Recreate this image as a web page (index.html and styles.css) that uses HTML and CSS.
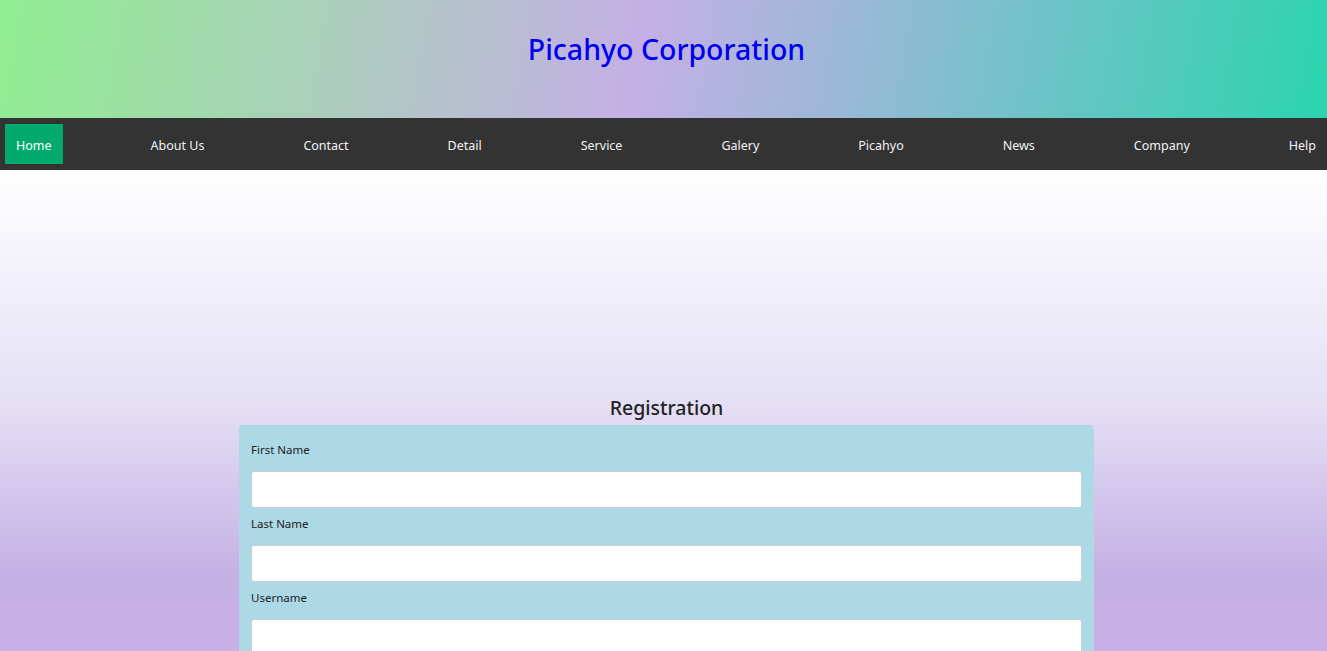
FILE: index.html
```html
<!DOCTYPE html>
<html>
<head>
<meta charset="utf-8">
<link rel="stylesheet" href="styles.css">
</head>
<body>
<header class="header"><h1 class="title">Picahyo Corporation</h1></header>
<nav class="nav">
  <a class="nav-item active">Home</a>
  <a class="nav-item">About Us</a>
  <a class="nav-item">Contact</a>
  <a class="nav-item">Detail</a>
  <a class="nav-item">Service</a>
  <a class="nav-item">Galery</a>
  <a class="nav-item">Picahyo</a>
  <a class="nav-item">News</a>
  <a class="nav-item">Company</a>
  <a class="nav-item">Help</a>
</nav>
<main class="main">
  <h2 class="reg-title">Registration</h2>
  <form class="form">
    <label class="label">First Name</label>
    <input class="input" type="text">
    <label class="label">Last Name</label>
    <input class="input" type="text">
    <label class="label">Username</label>
    <input class="input" type="text">
  </form>
</main>
</body>
</html>
```
FILE: styles.css
```css
html, body { margin: 0; padding: 0; }
body {
  font-family: "Noto Sans", "Open Sans", sans-serif;
  background: #c9b0e8;
  overflow: hidden;
}
.header {
  height: 118px;
  display: flex;
  align-items: center;
  justify-content: center;
  padding-left: 6px;
  box-sizing: border-box;
  background: linear-gradient(100deg, #90ee90 0%, #c4b0e4 48%, #9fb7d8 62%, #2bd4af 100%);
}
.title {
  margin: 0 0 20px 0;
  font-size: 28.5px;
  font-weight: 500;
  color: #0000ee;
}
.nav {
  height: 52px;
  background: #333333;
  display: flex;
  align-items: center;
  justify-content: space-between;
  padding: 0 0 0 5px;
  box-sizing: border-box;
}
.nav-item {
  color: #f2f2f2;
  font-size: 12.5px;
  padding: 13px 11px 9px;
  line-height: 18px;
}
.nav-item.active { background: #04aa6d; color: #fff; }
.main {
  background: linear-gradient(#ffffff 0px, #efedf9 130px, #e5e0f5 230px, #d8cdef 300px, #c4b0e3 410px, #c9b0e8 481px);
  min-height: 481px;
  padding-top: 222px;
  padding-left: 6px;
  box-sizing: border-box;
}
.reg-title {
  margin: 0;
  text-align: center;
  font-size: 19.5px;
  font-weight: 500;
  color: #222;
  line-height: 31px;
}
.form {
  width: 855px;
  margin: 2px auto 0;
  background: #add8e6;
  border-radius: 4px;
  padding: 16px 12px 12px;
  box-sizing: border-box;
  display: flex;
  flex-direction: column;
}
.label {
  font-size: 11.5px;
  color: #222;
  line-height: 18px;
  margin-bottom: 12px;
}
.input {
  height: 37px;
  border: 1px solid #c8d0d4;
  border-radius: 3px;
  background: #fff;
  margin: 0 0 7px 0;
  box-sizing: border-box;
}
```
